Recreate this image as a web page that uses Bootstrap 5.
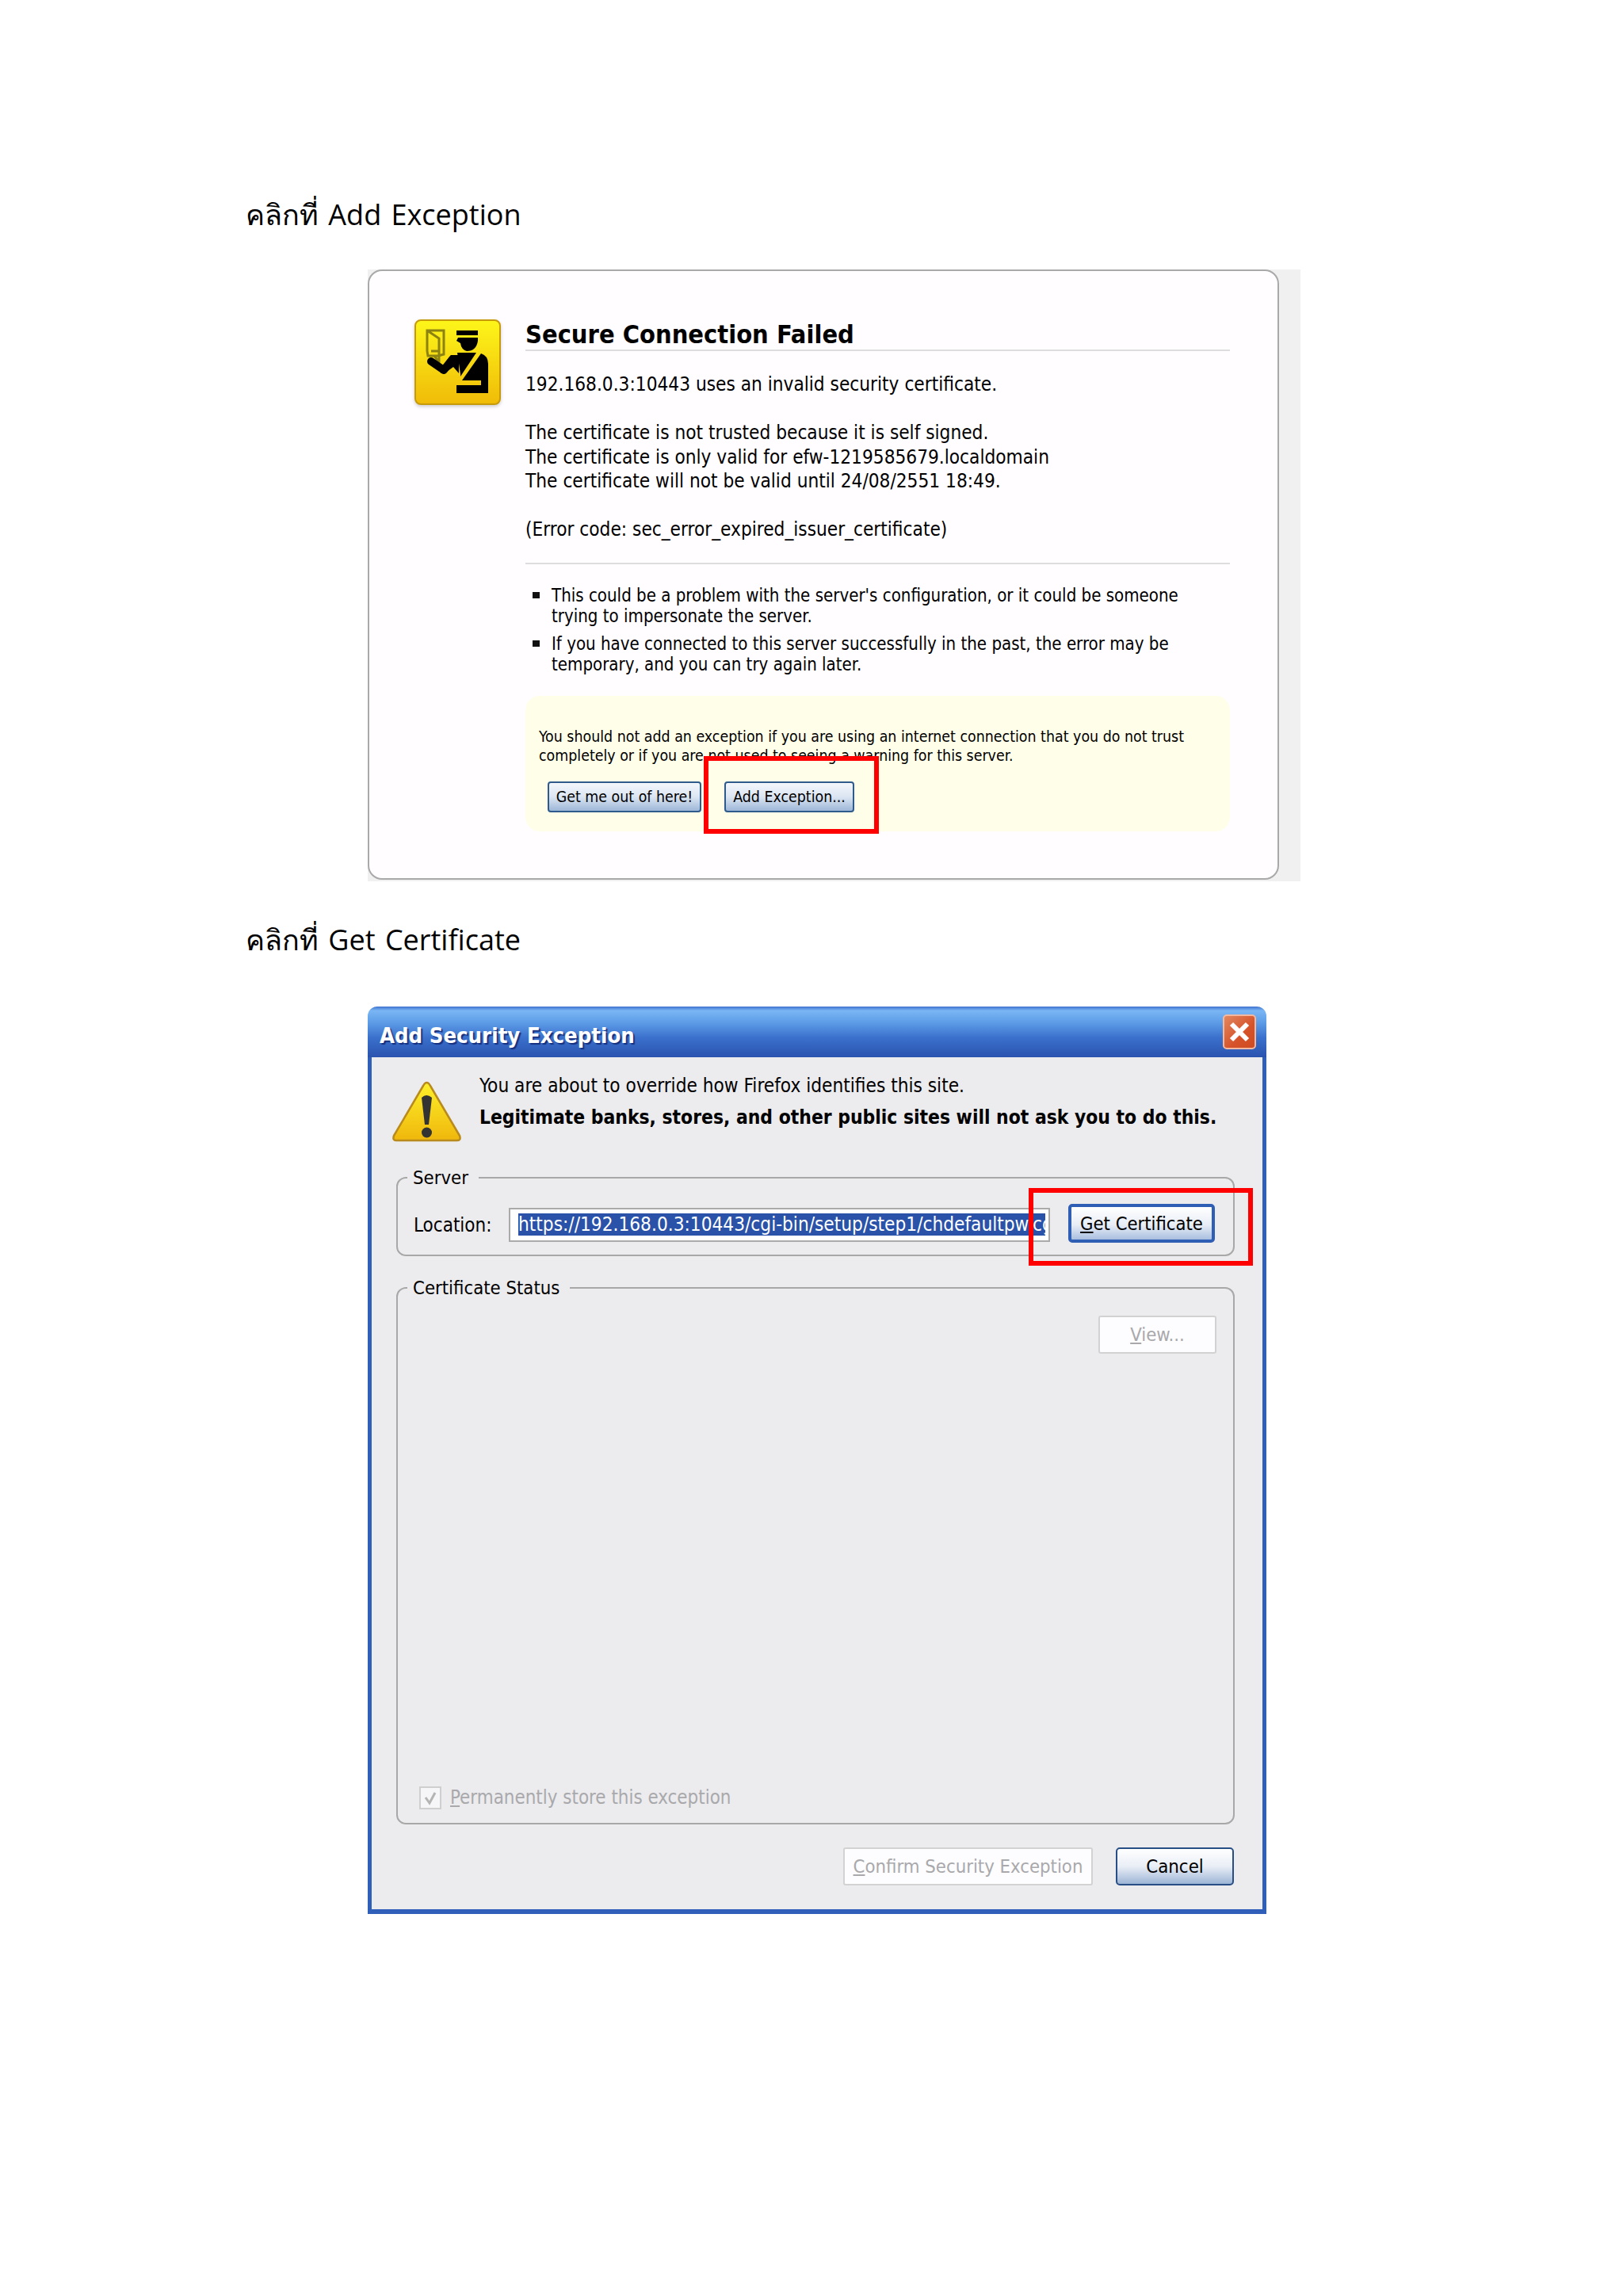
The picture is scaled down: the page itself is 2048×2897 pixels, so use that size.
<!DOCTYPE html>
<html lang="th">
<head>
    <meta charset="UTF-8">
    <meta name="viewport" content="width=device-width, initial-scale=1.0">
    <title>Add Exception</title>
    <link href="https://cdn.jsdelivr.net/npm/bootstrap@5.3.0/dist/css/bootstrap.min.css" rel="stylesheet">
    <style>
        body {
            background: #fff;
            color: #000;
            font-family: "DejaVu Sans Condensed", "DejaVu Sans", "Noto Sans", sans-serif;
            min-height: 2897px;
        }
        .doc-page { padding: 244px 0 0 310px; }
        .doc-heading {
            font-family: "Open Sans", "Noto Sans", "DejaVu Sans", sans-serif;
            font-size: 36px;
            font-weight: 400;
            line-height: 54px;
            word-spacing: 3px;
            margin: 0;
        }
        .second-heading { margin-top: 47px; }
        .shot-wrap { margin-left: 154px; position: relative; }

        /* first screenshot: firefox error page */
        .error-shot { width: 1177px; height: 772px; background: #f0f0f0; margin-top: 42px; }
        .error-card {
            width: 1150px; height: 770px;
            background: #fffdff;
            border: 2px solid #a9a9a9;
            border-radius: 18px;
            padding: 61px 59px 0 57px;
        }
        .officer-icon { width: 109px; height: 108px; margin-right: 31px; flex: none; filter: drop-shadow(0 2px 2px #0003); }
        .error-body { width: 889px; }
        .error-title {
            font-size: 32.3px; font-weight: 700;
            line-height: 38px; margin: 0;
            border-bottom: 2px solid #ddd;
        }
        .error-text { font-size: 24.2px; line-height: 30.5px; margin: 27px 0 0; }
        .error-text + .error-text { margin-top: 30.5px; }
        .error-rule { border-top: 2px solid #ddd; margin: 26px 0 26px; opacity: 1; }
        .error-list { list-style: none; margin: 0; padding: 0 40px 0 33px; font-size: 22.1px; line-height: 26px; }
        .error-list li { position: relative; margin-bottom: 9px; }
        .error-list li::before {
            content: ""; position: absolute; left: -24px; top: 9px;
            width: 9px; height: 8px; background: #111;
        }
        .warn-box {
            background: #ffffe9;
            border-radius: 18px;
            margin-top: 27px;
            height: 171px;
            padding: 40px 17px 0 17px;
            font-size: 19.4px; line-height: 24.5px;
        }
        .warn-actions { margin: 19px 0 0 11px; gap: 29px; }
        .xp-blue {
            height: 39px; padding: 0;
            font-size: 19.4px; line-height: 35px;
            color: #000;
            background: linear-gradient(#f4f7fc 0%, #dbe5f2 50%, #9db7d8 100%);
            border: 2px solid #2f5b8c;
            border-radius: 4px;
        }
        .out-btn { width: 194px; }
        .add-btn { width: 164px; }
        .red-mark { position: absolute; border: 6px solid #f00; z-index: 2; pointer-events: none; }
        .red-one { left: 424px; top: 614px; width: 221px; height: 98px; }
        .red-two { left: 834px; top: 229px; width: 283px; height: 98px; }

        /* second screenshot: xp dialog */
        .xp-dialog { width: 1134px; margin-top: 57px; }
        .xp-titlebar {
            height: 64px;
            padding: 0 13px 0 15px;
            background: linear-gradient(#3f72cf 0, #7ab6f4 8%, #5f9ee8 30%, #3a70cc 62%, #2a53ae 100%);
            border-radius: 12px 12px 0 0;
        }
        .xp-title {
            color: #fff;
            font-size: 27.3px; font-weight: 700;
            line-height: 64px; margin: 0;
            padding-top: 5px; height: 64px;
            text-shadow: 2px 2px 1px #16307f;
        }
        .xp-close {
            width: 42px; height: 44px; padding: 0;
            background: linear-gradient(135deg, #e2875f, #d6532a 60%, #cf4b22);
            border: 2px solid #f3b9a0;
            border-radius: 5px;
        }
        .xp-close svg { display: block; margin: auto; }
        .xp-body {
            background: #ecebee;
            border: solid #2f5fb8;
            border-width: 0 5px 6px;
            padding: 16px 35px 30px 31px;
            font-size: 24.2px;
        }
        .notice-row { margin-left: -6px; }
        .warn-icon { width: 89px; height: 79px; margin: 13px 22px 0 0; flex: none; }
        .notice-text { margin: 0; line-height: 40px; white-space: nowrap; }
        .notice-bold { font-size: 24.4px; font-weight: 700; }
        .xp-group {
            border: 2px solid #a8a8a8;
            border-radius: 12px;
            padding: 0 21px 15px 20px;
            min-width: 0;
        }
        .xp-group legend {
            float: none; width: auto;
            font-size: 23.7px; line-height: 28px;
            padding: 0 13px 0 7px;
            margin: 0 0 0 -8px;
        }
        .server-group { margin-top: 30px; }
        .server-row { padding-top: 19px; }
        .loc-label { margin: 4px 22px 0 0; font-size: 24px; width: 98px; flex: none; }
        .loc-input {
            width: 683px; height: 43px; flex: none;
            margin-top: 4px;
            background: #fff;
            border: 2px solid #aaa;
            padding: 5px 4px 6px 10px;
            overflow: hidden;
        }
        .loc-select {
            display: block;
            background: #2a52a8; color: #fff;
            white-space: nowrap; overflow: hidden;
            line-height: 28px; font-size: 24.2px;
        }
        .get-cert {
            width: 185px; height: 49px; margin-left: 23px; padding: 0;
            font-size: 23.6px; line-height: 40px;
            color: #000;
            background: linear-gradient(#fff 0%, #e8edf6 55%, #a9bfdf 100%);
            border: 4px solid #2f5fb5;
            border-radius: 5px;
            flex: none;
        }
        .status-group { margin-top: 26px; padding-bottom: 17px; }
        .status-inner { height: 644px; padding-top: 21px; }
        .xp-off, .xp-off:disabled {
            height: 48px; padding: 0;
            font-size: 23.7px; line-height: 44px;
            color: #a9a9ac;
            background: #fdfcfe;
            border: 2px solid #d2d2d2;
            border-radius: 3px;
            opacity: 1;
        }
        .view-btn { width: 149px; }
        .keep-row { color: #a9a9ac; font-size: 23.9px; margin-left: 7px; line-height: 29px; }
        .keep-box {
            width: 28px; height: 29px; margin-right: 11px;
            background: #f6f5f7; border: 2px solid #cfcfcf;
        }
        .keep-box svg { display: block; }
        .dialog-actions { margin-top: 29px; gap: 29px; padding-right: 1px; }
        .confirm-btn { width: 315px; }
        .cancel-btn {
            width: 149px; height: 48px; padding: 0;
            font-size: 23.8px; line-height: 44px; color: #000;
            background: linear-gradient(#fff 0%, #e9eef6 50%, #9db5d6 100%);
            border: 2px solid #274f86;
            border-radius: 5px;
        }
    </style>
</head>
<body>
<div class="doc-page">
    <h2 class="doc-heading">คลิกที่ Add Exception</h2>

    <div class="shot-wrap error-shot">
        <div class="card error-card d-flex flex-row align-items-start">
            <svg class="officer-icon" viewBox="0 0 109 108">
                <defs>
                    <linearGradient id="officerBg" x1="0" y1="0" x2="0" y2="1">
                        <stop offset="0" stop-color="#fdf61a"/>
                        <stop offset="1" stop-color="#f0bb08"/>
                    </linearGradient>
                </defs>
                <rect x="1" y="1" width="107" height="106" rx="7" fill="url(#officerBg)" stroke="#c79a0a" stroke-width="2"/>
                <path d="M16 14 H37 V44 L30 46 L17 46 L16 40 Z M16 14 L31 24 V54 L25 46 M31 40 H21" fill="none" stroke="#8c8212" stroke-width="3"/>
                <path d="M53 14 H80 V20 H53 Z M55 23 H80 V27 Q78 40 66 40 Q59 38 58 30 L53 27 Z" fill="#000"/>
                <path d="M54 42 L78 42 L58 72 V69 Z M84 43 Q93 46 93 56 V93 H53 V83 H84 V77 H60 Z M46 45 H56 V68 L49 60 L38 68 L33 68 Z" fill="#000"/>
                <path d="M21 53 L37 64 L48 50" fill="none" stroke="#000" stroke-width="10" stroke-linecap="round" stroke-linejoin="round"/>
            </svg>
            <div class="error-body">
                <h1 class="error-title">Secure Connection Failed</h1>
                <p class="error-text">192.168.0.3:10443 uses an invalid security certificate.</p>
                <p class="error-text">The certificate is not trusted because it is self signed.<br>The certificate is only valid for efw-1219585679.localdomain<br>The certificate will not be valid until 24/08/2551 18:49.</p>
                <p class="error-text">(Error code: sec_error_expired_issuer_certificate)</p>
                <hr class="error-rule">
                <ul class="error-list">
                    <li>This could be a problem with the server's configuration, or it could be someone trying to impersonate the server.</li>
                    <li>If you have connected to this server successfully in the past, the error may be temporary, and you can try again later.</li>
                </ul>
                <div class="warn-box">
                    <div>You should not add an exception if you are using an internet connection that you do not trust completely or if you are not used to seeing a warning for this server.</div>
                    <div class="warn-actions d-flex">
                        <button type="button" class="btn xp-blue out-btn">Get me out of here!</button>
                        <button type="button" class="btn xp-blue add-btn">Add Exception...</button>
                    </div>
                </div>
            </div>
        </div>
        <div class="red-mark red-one"></div>
    </div>

    <h2 class="doc-heading second-heading">คลิกที่ Get Certificate</h2>

    <div class="shot-wrap xp-dialog">
        <div class="xp-titlebar d-flex justify-content-between align-items-center">
            <h5 class="xp-title">Add Security Exception</h5>
            <button type="button" class="btn xp-close" aria-label="Close">
                <svg width="28" height="28" viewBox="0 0 28 28"><path d="M4 4 L24 24 M24 4 L4 24" stroke="#fff" stroke-width="6"/></svg>
            </button>
        </div>
        <div class="xp-body">
            <div class="notice-row d-flex align-items-start">
                <svg class="warn-icon" viewBox="0 0 89 79">
                    <defs>
                        <linearGradient id="warnBg" x1="0" y1="0" x2="0" y2="1">
                            <stop offset="0" stop-color="#fdf02a"/>
                            <stop offset="1" stop-color="#f0b70c"/>
                        </linearGradient>
                    </defs>
                    <path d="M44.5 3 Q47 3 49 7 L86 70 Q88 76 83 76 H6 Q1 76 3 70 L40 7 Q42 3 44.5 3 Z" fill="url(#warnBg)" stroke="#b98a1c" stroke-width="2.5" stroke-linejoin="round"/>
                    <path d="M38 22 Q44 16 51 22 L47 56 H42 Z" fill="#333"/>
                    <circle cx="44.5" cy="66" r="6.5" fill="#333"/>
                </svg>
                <div>
                    <p class="notice-text">You are about to override how Firefox identifies this site.</p>
                    <p class="notice-text notice-bold">Legitimate banks, stores, and other public sites will not ask you to do this.</p>
                </div>
            </div>

            <fieldset class="xp-group server-group">
                <legend>Server</legend>
                <div class="server-row d-flex align-items-center">
                    <span class="loc-label">Location:</span>
                    <div class="loc-input"><span class="loc-select">https://192.168.0.3:10443/cgi-bin/setup/step1/chdefaultpw.cgi</span></div>
                    <button type="button" class="btn get-cert"><u>G</u>et Certificate</button>
                </div>
            </fieldset>

            <fieldset class="xp-group status-group">
                <legend>Certificate Status</legend>
                <div class="status-inner d-flex flex-column justify-content-between">
                    <div class="d-flex justify-content-end">
                        <button type="button" class="btn xp-off view-btn" disabled><u>V</u>iew...</button>
                    </div>
                    <div class="keep-row d-flex align-items-center">
                        <span class="keep-box">
                            <svg width="24" height="25" viewBox="0 0 24 25"><path d="M6 12 L11 19 L18 6" fill="none" stroke="#b4b4b4" stroke-width="3"/></svg>
                        </span>
                        <span><u>P</u>ermanently store this exception</span>
                    </div>
                </div>
            </fieldset>

            <div class="dialog-actions d-flex justify-content-end">
                <button type="button" class="btn xp-off confirm-btn" disabled><u>C</u>onfirm Security Exception</button>
                <button type="button" class="btn cancel-btn">Cancel</button>
            </div>
        </div>
        <div class="red-mark red-two"></div>
    </div>
</div>
<script src="https://cdn.jsdelivr.net/npm/bootstrap@5.3.0/dist/js/bootstrap.bundle.min.js"></script>
</body>
</html>
